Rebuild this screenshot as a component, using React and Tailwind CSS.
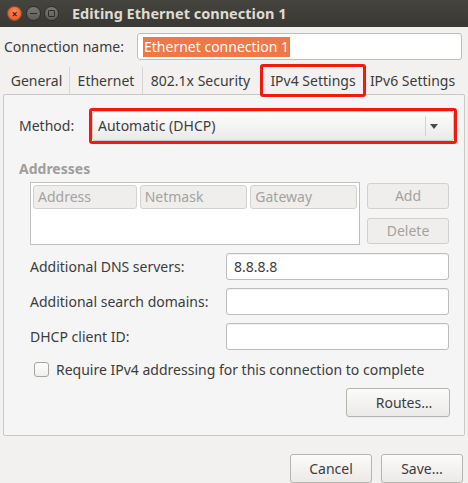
import React from "react";

const Btn = ({ children, className = "", disabled = false }) => (
  <div
    className={
      "shrink-0 whitespace-nowrap flex items-center justify-center rounded-[3px] border " +
      (disabled
        ? "border-[#d2d0ce] bg-[#efeeed] text-[#a4a29f] "
        : "border-[#b6b4b1] bg-gradient-to-b from-[#fbfbfa] to-[#ebeae8] text-[#3c3c3c] shadow-[0_1px_0_rgba(0,0,0,0.04)] ") +
      className
    }
  >
    {children}
  </div>
);

const Field = ({ value = "" }) => (
  <div className="shrink-0 h-[27px] w-[223px] rounded-[3px] border border-[#bfbdba] bg-white pl-[7px] flex items-center text-[#3c3c3c] shadow-[inset_0_1px_1px_rgba(0,0,0,0.06)]">
    {value}
  </div>
);

const Row = ({ label, value }) => (
  <div className="flex items-center h-[27px]">
    <div className="shrink-0 whitespace-nowrap w-[222px] pl-[26px] text-[#3c3c3c]">{label}</div>
    <Field value={value} />
  </div>
);

const Tab = ({ children, className = "" }) => (
  <div className={"shrink-0 whitespace-nowrap h-[27px] flex items-center text-[#3c3c3c] " + className}>
    {children}
  </div>
);

export default function App() {
  return (
    <div
      className="w-[468px] h-[483px] overflow-hidden bg-[#f2f1f0] text-[14px] leading-none"
      style={{ fontFamily: '"Noto Sans", "Open Sans", sans-serif' }}
    >
      {/* TITLE BAR */}
      <div className="h-[27px] flex items-center px-[7px] bg-gradient-to-b from-[#45443f] to-[#393834]">
        <div className="w-[15px] h-[15px] rounded-full bg-[radial-gradient(circle_at_50%_35%,#f98a5c,#e4521f)] border border-[#3a2018]/40 flex items-center justify-center text-[#4a1c0c] text-[10px] font-bold">
          ×
        </div>
        <div className="ml-[4px] w-[15px] h-[15px] rounded-full bg-gradient-to-b from-[#797873] to-[#5e5d59] border border-[#2e2d29] flex items-center justify-center">
          <div className="w-[7px] h-[1.5px] bg-[#2e2d2a]" />
        </div>
        <div className="ml-[3px] w-[15px] h-[15px] rounded-full bg-gradient-to-b from-[#797873] to-[#5e5d59] border border-[#2e2d29] flex items-center justify-center">
          <div className="w-[7px] h-[7px] border-[1.5px] border-[#2e2d2a] rounded-[1px]" />
        </div>
        <div className="ml-[13px] text-[#dfdbd2] font-bold text-[14.5px] whitespace-nowrap">
          Editing Ethernet connection 1
        </div>
      </div>

      {/* CONNECTION NAME */}
      <div className="flex items-center mt-[6px] h-[27px]">
        <div className="shrink-0 whitespace-nowrap w-[137px] pl-[4px] text-[#3c3c3c]">Connection name:</div>
        <div className="shrink-0 h-[27px] w-[325px] rounded-[3px] border border-[#bfbdba] bg-white flex items-center pl-[5px]">
          <span className="whitespace-nowrap bg-[#f07746] text-white px-[1px] py-[3px]">Ethernet connection 1</span>
        </div>
      </div>

      {/* TABS */}
      <div className="flex items-end h-[33px] pl-[4px] mt-[1px]">
        <Tab className="w-[66px] justify-center border-r border-[#d8d6d3]">General</Tab>
        <Tab className="w-[73px] justify-center border-r border-[#d8d6d3]">Ethernet</Tab>
        <Tab className="w-[115px] justify-center">802.1x Security</Tab>
        <div className="shrink-0 whitespace-nowrap h-[33px] w-[106px] ml-[2px] mb-[-3px] border-[3px] border-[#f2190d] rounded-[3px] flex items-center justify-center text-[#3c3c3c] relative z-10">
          IPv4 Settings
        </div>
        <Tab className="w-[93px] justify-center">IPv6 Settings</Tab>
      </div>

      {/* PANEL */}
      <div className="ml-[3px] w-[462px] h-[342px] border border-[#cac8c5] rounded-[2px] bg-[#f5f5f5]">
        <div className="flex items-center mt-[13px]">
          <div className="shrink-0 w-[85px] pl-[15px] text-[#3c3c3c]">Method:</div>
          <div className="shrink-0 w-[368px] h-[36px] border-[3px] border-[#f2190d] rounded-[3px]">
            <div className="h-full rounded-[3px] border border-[#c9c7c4] bg-gradient-to-b from-[#fdfdfd] to-[#ebeae8] flex items-center">
              <div className="flex-1 pl-[5px] text-[#3c3c3c]">Automatic (DHCP)</div>
              <div className="w-px h-[20px] bg-[#d6d4d1]" />
              <div className="w-[27px] pl-[4px] flex">
                <div className="w-0 h-0 border-l-[4px] border-r-[4px] border-t-[5px] border-l-transparent border-r-transparent border-t-[#4c4c4c]" />
              </div>
            </div>
          </div>
        </div>

        <div className="mt-[18px] pl-[15px] font-bold text-[#a09e9b]">Addresses</div>

        <div className="flex mt-[6px] pl-[26px]">
          <div className="shrink-0 w-[330px] h-[63px] border border-[#c2c0bd] bg-white p-[2px]">
            <div className="flex gap-[3px] h-[24px]">
              <div className="w-[104px] rounded-[3px] border border-[#d4d2cf] bg-[#efeeed] flex items-center pl-[4px] text-[#a4a29f]">Address</div>
              <div className="w-[108px] rounded-[3px] border border-[#d4d2cf] bg-[#efeeed] flex items-center pl-[4px] text-[#a4a29f]">Netmask</div>
              <div className="w-[107px] rounded-[3px] border border-[#d4d2cf] bg-[#efeeed] flex items-center pl-[4px] text-[#a4a29f]">Gateway</div>
            </div>
          </div>
          <div className="ml-[7px] flex flex-col gap-[9px] pt-[1px]">
            <Btn disabled className="w-[82px] h-[26px]">Add</Btn>
            <Btn disabled className="w-[82px] h-[26px]">Delete</Btn>
          </div>
        </div>

        <div className="mt-[8px] flex flex-col gap-[8px]">
          <Row label="Additional DNS servers:" value="8.8.8.8" />
          <Row label="Additional search domains:" />
          <Row label="DHCP client ID:" />
        </div>

        <div className="flex items-center mt-[12px] pl-[30px]">
          <div className="shrink-0 w-[15px] h-[15px] rounded-[3px] border border-[#a8a6a3] bg-gradient-to-b from-white to-[#f0efee]" />
          <div className="ml-[7px] whitespace-nowrap text-[#3c3c3c]">Require IPv4 addressing for this connection to complete</div>
        </div>

        <div className="flex justify-end pr-[14px] mt-[11px]">
          <Btn className="w-[104px] h-[29px] pl-[12px]">Routes…</Btn>
        </div>
      </div>

      {/* FOOTER */}
      <div className="flex justify-end gap-[9px] pr-[5px] mt-[18px]">
        <Btn className="w-[82px] h-[29px]">Cancel</Btn>
        <Btn className="w-[82px] h-[29px]">Save…</Btn>
      </div>
    </div>
  );
}
